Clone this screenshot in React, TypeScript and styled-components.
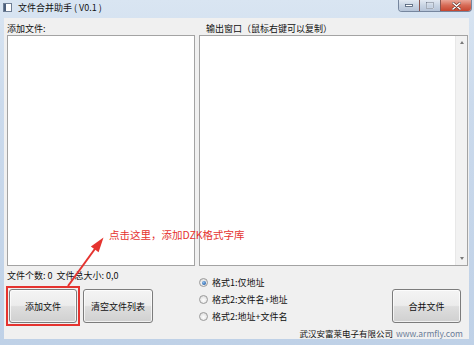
import styled, { createGlobalStyle } from "styled-components";

const GlobalStyle = createGlobalStyle`
  html, body {
    margin: 0;
    padding: 0;
    background: #c8d8ec;
  }
  body {
    font-family: "Noto Sans CJK SC", "Noto Sans", sans-serif;
  }
`;

const FONT = `"Noto Sans CJK SC", "Noto Sans", sans-serif`;

const Window = styled.div`
  position: relative;
  width: 474px;
  height: 345px;
  display: flex;
  flex-direction: column;
  background: linear-gradient(180deg, #d9e5f2 0%, #cbdaec 30%, #bfd1e7 100%);
  overflow: hidden;
  box-sizing: border-box;
`;

const TitleBar = styled.div`
  height: 18px;
  display: flex;
  align-items: flex-start;
  flex-shrink: 0;
`;

const AppIcon = styled.svg`
  margin: 3px 0 0 3px;
  flex-shrink: 0;
`;

const Title = styled.div`
  margin-left: 6px;
  padding-top: 1px;
  font-family: ${FONT};
  font-size: 9px;
  line-height: 14px;
  color: #111;
  flex: 1;
  white-space: pre;
`;

const CaptionGroup = styled.div`
  display: flex;
  margin-right: 2px;
  height: 12px;
  border: 1px solid #76869e;
  border-top: none;
  border-radius: 0 0 4px 4px;
  overflow: hidden;
  box-sizing: border-box;
`;

const CaptionButton = styled.div<{ $close?: boolean; $w: number }>`
  width: ${(p) => p.$w}px;
  height: 100%;
  display: flex;
  align-items: center;
  justify-content: center;
  & + & {
    border-left: 1px solid ${(p) => (p.$close ? "#8a5650" : "#95a4ba")};
  }
  background: ${(p) =>
    p.$close
      ? "linear-gradient(180deg, #e9a597 0%, #d66a55 50%, #c6452f 100%)"
      : "linear-gradient(180deg, #e2e9f2 0%, #c8d4e3 50%, #b6c4d8 100%)"};
`;

const Client = styled.div`
  flex: 1;
  margin: 0 5px 6px 4px;
  padding: 4px 1px 0 3px;
  background: #f0f0f0;
  display: flex;
  flex-direction: column;
  box-sizing: border-box;
`;

const Panels = styled.div`
  display: grid;
  grid-template-columns: 188px 1fr;
  column-gap: 4px;
`;

const Column = styled.div`
  display: flex;
  flex-direction: column;
`;

const Label = styled.div<{ $indent?: number }>`
  height: 13px;
  line-height: 13px;
  padding-left: ${(p) => p.$indent || 0}px;
  font-family: ${FONT};
  font-size: 9px;
  color: #111;
  white-space: nowrap;
`;

const ListBox = styled.div`
  height: 231px;
  background: #fff;
  border: 1px solid #a3a3a3;
  box-sizing: border-box;
  display: flex;
  justify-content: flex-end;
`;

const ScrollBar = styled.div`
  width: 12px;
  background: #f2f2f2;
  border-left: 1px solid #e8e8e8;
  display: flex;
  flex-direction: column;
  justify-content: space-between;
  align-items: center;
  padding: 5px 0;
  box-sizing: border-box;
`;

const Arrow = styled.div<{ $down?: boolean }>`
  width: 0;
  height: 0;
  border-left: 2.5px solid transparent;
  border-right: 2.5px solid transparent;
  ${(p) =>
    p.$down
      ? "border-top: 3px solid #7a7a7a;"
      : "border-bottom: 3px solid #7a7a7a;"}
`;

const Bottom = styled.div`
  display: grid;
  grid-template-columns: 192px 1fr auto;
`;

const Status = styled.div`
  margin-top: 3px;
  height: 14px;
  line-height: 14px;
  font-family: ${FONT};
  font-size: 9px;
  color: #111;
  white-space: nowrap;
`;

const ButtonRow = styled.div`
  margin-top: 3px;
  margin-left: -1px;
  display: flex;
  align-items: center;
  gap: 3px;
`;

const Highlight = styled.div`
  border: 2px solid #e5332f;
  padding: 1px;
  display: flex;
`;

const PushButton = styled.button<{ $w: number; $h: number }>`
  width: ${(p) => p.$w}px;
  height: ${(p) => p.$h}px;
  padding: 0;
  border: 1px solid #7c7c7c;
  border-radius: 3px;
  background: linear-gradient(
    180deg,
    #f4f4f4 0%,
    #ececec 48%,
    #dedede 52%,
    #d0d0d0 100%
  );
  box-shadow: inset 0 0 0 1px rgba(255, 255, 255, 0.7);
  font-family: ${FONT};
  font-size: 9px;
  color: #111;
`;

const RadioGroup = styled.div`
  padding-top: 8px;
  display: flex;
  flex-direction: column;
`;

const RadioRow = styled.label`
  height: 17px;
  display: flex;
  align-items: center;
  gap: 4px;
  font-family: ${FONT};
  font-size: 9px;
  color: #111;
  white-space: nowrap;
`;

const RadioDot = styled.span<{ $checked?: boolean }>`
  width: 9px;
  height: 9px;
  border-radius: 50%;
  border: 1px solid #9a9a9a;
  box-sizing: border-box;
  background: radial-gradient(circle at 50% 60%, #ffffff 0%, #e6e6e6 60%, #d2d2d2 100%);
  display: flex;
  align-items: center;
  justify-content: center;
  &::after {
    content: "";
    display: ${(p) => (p.$checked ? "block" : "none")};
    width: 4px;
    height: 4px;
    border-radius: 50%;
    background: radial-gradient(circle at 40% 35%, #8fc0ee 0%, #2e67ad 70%, #1e4a86 100%);
  }
`;

const MergeCell = styled.div`
  padding-top: 23px;
  padding-right: 7px;
`;

const Footer = styled.div`
  margin-top: 2px;
  height: 11px;
  line-height: 11px;
  padding-right: 5px;
  text-align: right;
  font-family: ${FONT};
  font-size: 8.5px;
  color: #111;
  white-space: nowrap;
`;

const FooterUrl = styled.span`
  margin-left: 3px;
  color: #6b7d99;
`;

const Annotation = styled.svg`
  position: absolute;
  left: 0;
  top: 0;
  pointer-events: none;
`;

const Callout = styled.div`
  position: absolute;
  left: 109px;
  top: 228px;
  font-family: ${FONT};
  font-size: 10.5px;
  line-height: 14px;
  color: #e5332f;
  white-space: nowrap;
`;

const formats = [
  { text: "格式1:仅地址", checked: true },
  { text: "格式2:文件名+地址", checked: false },
  { text: "格式2:地址+文件名", checked: false },
];

export default function App() {
  return (
    <>
      <GlobalStyle />
      <Window>
        <TitleBar>
          <AppIcon width="9" height="9" viewBox="0 0 9 9">
            <rect x="0.5" y="0.5" width="8" height="8" fill="#fdfdfd" stroke="#6f7f95" />
            <rect x="1" y="1" width="2" height="7" fill="#4b5f7c" />
          </AppIcon>
          <Title>文件合并助手 ( V0.1 )</Title>
          <CaptionGroup>
            <CaptionButton $w={20}>
              <svg width="8" height="3" viewBox="0 0 8 3">
                <rect x="0.5" y="0.5" width="7" height="2" fill="#fff" stroke="#4a5a72" strokeWidth="0.8" />
              </svg>
            </CaptionButton>
            <CaptionButton $w={20}>
              <svg width="8" height="7" viewBox="0 0 8 7">
                <rect x="0.5" y="0.5" width="7" height="6" fill="none" stroke="#fff" strokeWidth="1.2" />
                <rect x="0.5" y="0.5" width="7" height="6" fill="none" stroke="#4a5a72" strokeWidth="0.5" />
              </svg>
            </CaptionButton>
            <CaptionButton $w={30} $close>
              <svg width="9" height="8" viewBox="0 0 9 8">
                <path d="M1 1 L8 7 M8 1 L1 7" stroke="#5a2a24" strokeWidth="2.6" strokeLinecap="round" />
                <path d="M1 1 L8 7 M8 1 L1 7" stroke="#fff" strokeWidth="1.6" strokeLinecap="round" />
              </svg>
            </CaptionButton>
          </CaptionGroup>
        </TitleBar>

        <Client>
          <Panels>
            <Column>
              <Label>添加文件:</Label>
              <ListBox />
            </Column>
            <Column>
              <Label $indent={7}>输出窗口（鼠标右键可以复制）</Label>
              <ListBox>
                <ScrollBar>
                  <Arrow />
                  <Arrow $down />
                </ScrollBar>
              </ListBox>
            </Column>
          </Panels>

          <Bottom>
            <Column>
              <Status>文件个数: 0&nbsp;&nbsp;文件总大小: 0,0</Status>
              <ButtonRow>
                <Highlight>
                  <PushButton $w={68} $h={34}>添加文件</PushButton>
                </Highlight>
                <PushButton $w={70} $h={34}>清空文件列表</PushButton>
              </ButtonRow>
            </Column>
            <RadioGroup>
              {formats.map((f) => (
                <RadioRow key={f.text}>
                  <RadioDot $checked={f.checked} />
                  {f.text}
                </RadioRow>
              ))}
            </RadioGroup>
            <MergeCell>
              <PushButton $w={69} $h={34}>合并文件</PushButton>
            </MergeCell>
          </Bottom>

          <Footer>
            武汉安富莱电子有限公司<FooterUrl>www.armfly.com</FooterUrl>
          </Footer>
        </Client>

        <Annotation width="474" height="345" viewBox="0 0 474 345">
          <line x1="68" y1="286" x2="97" y2="246" stroke="#e5332f" strokeWidth="2" />
          <polygon points="103.5,237.5 98.6,252.2 90.9,246.6" fill="#e5332f" />
        </Annotation>
        <Callout>点击这里，添加DZK格式字库</Callout>
      </Window>
    </>
  );
}
